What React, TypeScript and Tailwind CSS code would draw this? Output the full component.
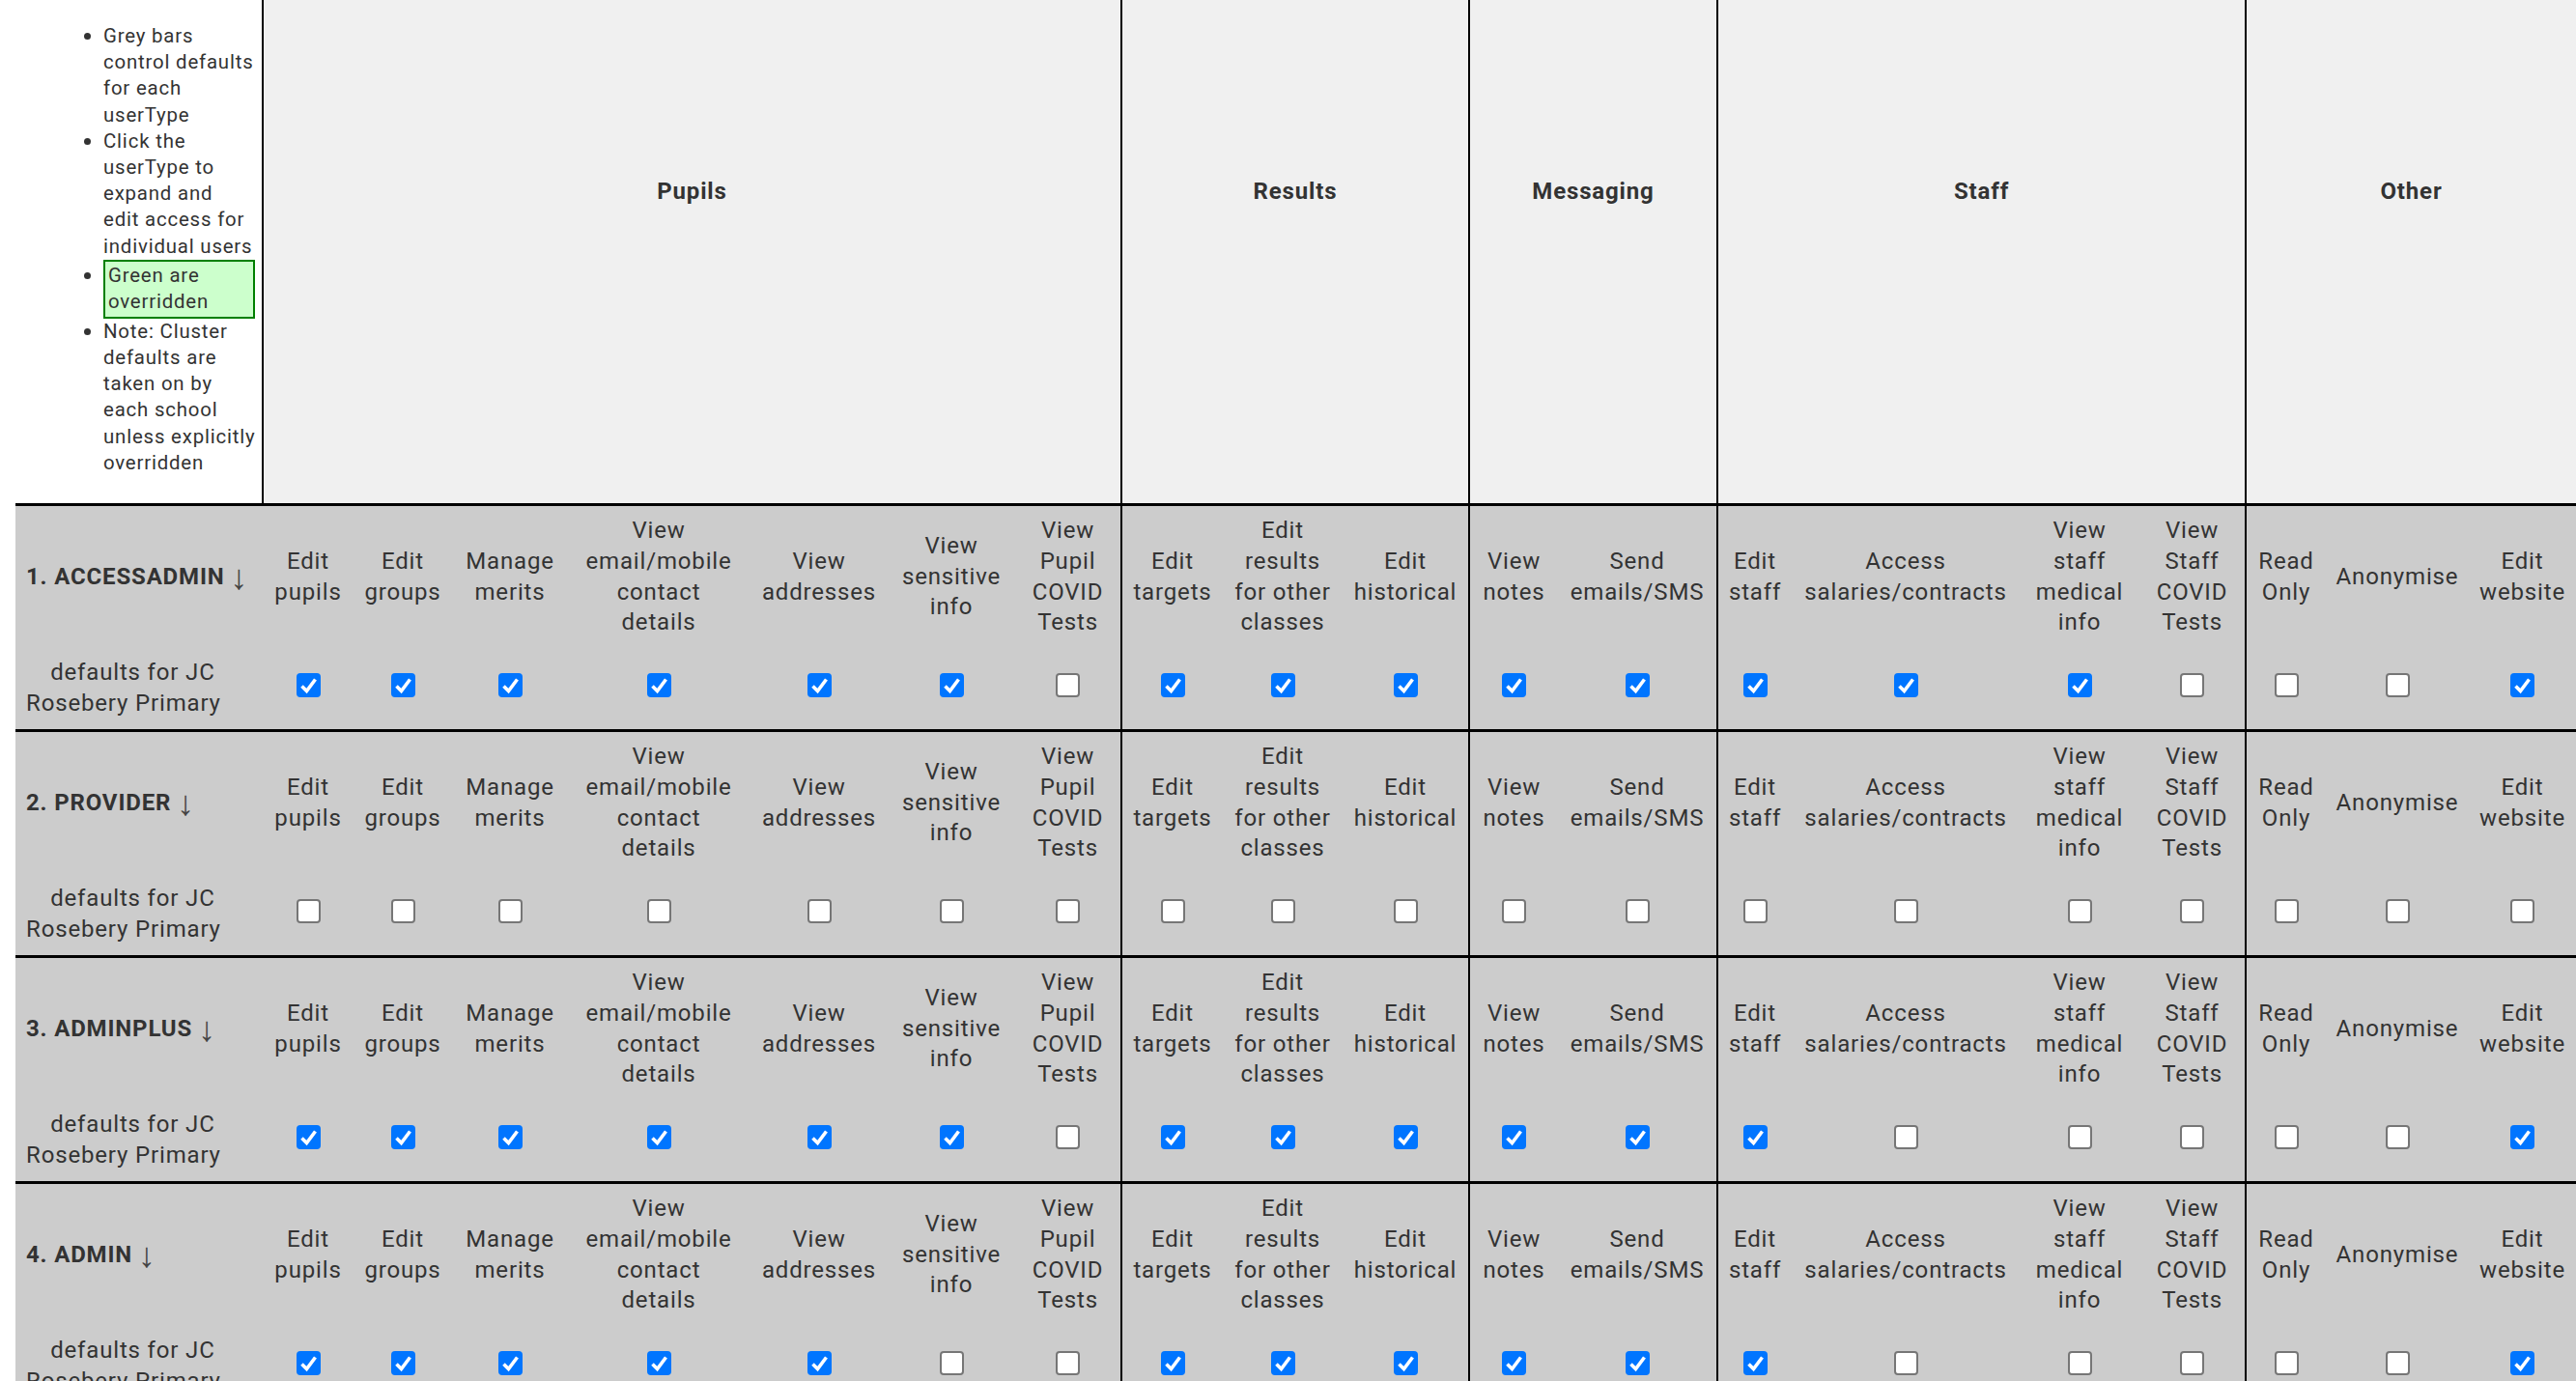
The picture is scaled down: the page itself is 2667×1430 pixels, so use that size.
import React from "react"

type Perm = { lines: string[] }

const COLUMNS: Perm[] = [
  { lines: ["Edit", "pupils"] },
  { lines: ["Edit", "groups"] },
  { lines: ["Manage", "merits"] },
  { lines: ["View", "email/mobile", "contact", "details"] },
  { lines: ["View", "addresses"] },
  { lines: ["View", "sensitive", "info"] },
  { lines: ["View", "Pupil", "COVID", "Tests"] },
  { lines: ["Edit", "targets"] },
  { lines: ["Edit", "results", "for other", "classes"] },
  { lines: ["Edit", "historical"] },
  { lines: ["View", "notes"] },
  { lines: ["Send", "emails/SMS"] },
  { lines: ["Edit", "staff"] },
  { lines: ["Access", "salaries/contracts"] },
  { lines: ["View", "staff", "medical", "info"] },
  { lines: ["View", "Staff", "COVID", "Tests"] },
  { lines: ["Read", "Only"] },
  { lines: ["Anonymise"] },
  { lines: ["Edit", "website"] },
]

// first column of each group gets the black divider
const GROUP_STARTS = [7, 10, 12, 16]

const GROUPS = [
  { name: "Pupils", span: "col-span-7", divider: false },
  { name: "Results", span: "col-span-3", divider: true },
  { name: "Messaging", span: "col-span-2", divider: true },
  { name: "Staff", span: "col-span-4", divider: true },
  { name: "Other", span: "col-span-3", divider: true },
]

const USER_TYPES = [
  { label: "1. ACCESSADMIN", perms: "1111110" + "111" + "11" + "1110" + "001" },
  { label: "2. PROVIDER", perms: "0000000" + "000" + "00" + "0000" + "000" },
  { label: "3. ADMINPLUS", perms: "1111110" + "111" + "11" + "1000" + "001" },
  { label: "4. ADMIN", perms: "1111100" + "111" + "11" + "1000" + "001" },
]

const LEGEND = [
  { lines: ["Grey bars", "control defaults", "for each", "userType"] },
  { lines: ["Click the", "userType to", "expand and", "edit access for", "individual users"] },
  { lines: ["Green are", "overridden"], green: true },
  { lines: ["Note: Cluster", "defaults are", "taken on by", "each school", "unless explicitly", "overridden"] },
]

function Checkbox({ checked }: { checked: boolean }) {
  if (!checked) {
    return <div className="w-[25px] h-[25px] rounded-[4px] border-2 border-[#767676] bg-white" />
  }
  return (
    <div className="w-[25px] h-[25px] rounded-[4px] bg-[#0075ff] flex items-center justify-center">
      <svg width="25" height="25" viewBox="0 0 25 25">
        <path d="M5.5 13.5 L10.5 18.5 L19.5 6.5" fill="none" stroke="white" strokeWidth="3.6" />
      </svg>
    </div>
  )
}

function UserTypeRows({ label, perms }: { label: string; perms: string }) {
  return (
    <>
      <div className="h-[150px] bg-[#cccccc] border-t-[3px] border-black flex items-center pl-[11px] whitespace-nowrap">
        <span className="font-bold">{label}</span>
        <span className="ml-[6px] font-['Liberation_Sans',sans-serif] font-normal text-[36px] leading-[31px] tracking-normal text-[#444444]">↓</span>
      </div>
      {COLUMNS.map((col, i) => (
        <div
          key={i}
          className={
            "h-[150px] bg-[#cccccc] border-t-[3px] border-black flex flex-col items-center justify-center text-center whitespace-nowrap" +
            (GROUP_STARTS.includes(i) ? " border-l-2" : "")
          }
        >
          {col.lines.map((l) => (
            <span key={l}>{l}</span>
          ))}
        </div>
      ))}
      <div className="h-[84px] bg-[#cccccc] flex items-center pl-[11px] whitespace-nowrap">
        <div className="inline-flex flex-col items-center">
          <span className="pl-[19px]">defaults for JC</span>
          <span>Rosebery Primary</span>
        </div>
      </div>
      {COLUMNS.map((_, i) => (
        <div
          key={i}
          className={
            "h-[84px] bg-[#cccccc] flex items-center justify-center pb-[8px] border-black" +
            (GROUP_STARTS.includes(i) ? " border-l-2" : "")
          }
        >
          <Checkbox checked={perms[i] === "1"} />
        </div>
      ))}
    </>
  )
}

export default function App() {
  return (
    <div className="h-[1430px] overflow-hidden bg-white pl-[16px] font-['Roboto',sans-serif] text-[#333333] text-[24px] leading-[31.7px] tracking-[0.035em]">
      <div className="grid grid-cols-[257px_92px_104px_118px_190px_142px_132px_109px_106px_124px_130px_93px_164px_78px_236px_124px_109px_84px_148px_111px]">
        {/* legend */}
        <div className="h-[521px] border-r-2 border-black bg-white pt-[24px] text-[20.4px] leading-[27.2px] tracking-[0.04em]">
          {LEGEND.map((item, i) => (
            <div key={i} className="flex">
              <div className={"w-[91px] flex justify-end pr-[13px] " + (item.green ? "pt-[3px]" : "")}>
                <div className="h-[27.2px] flex items-center">
                  <div className="w-[7px] h-[7px] rounded-full bg-[#333333]" />
                </div>
              </div>
              <div
                className={
                  "whitespace-nowrap flex flex-col " +
                  (item.green ? "w-[157px] border-2 border-[#008000] bg-[#ccffcc] pl-[3px] py-[1.3px]" : "")
                }
              >
                {item.lines.map((l) => (
                  <span key={l}>{l}</span>
                ))}
              </div>
            </div>
          ))}
        </div>
        {/* group headings */}
        {GROUPS.map((g) => (
          <div
            key={g.name}
            className={
              g.span +
              " h-[521px] bg-[#f0f0f0] pt-[183px] text-center font-bold border-black" +
              (g.divider ? " border-l-2" : "")
            }
          >
            {g.name}
          </div>
        ))}
        {USER_TYPES.map((u) => (
          <UserTypeRows key={u.label} label={u.label} perms={u.perms} />
        ))}
      </div>
    </div>
  )
}
